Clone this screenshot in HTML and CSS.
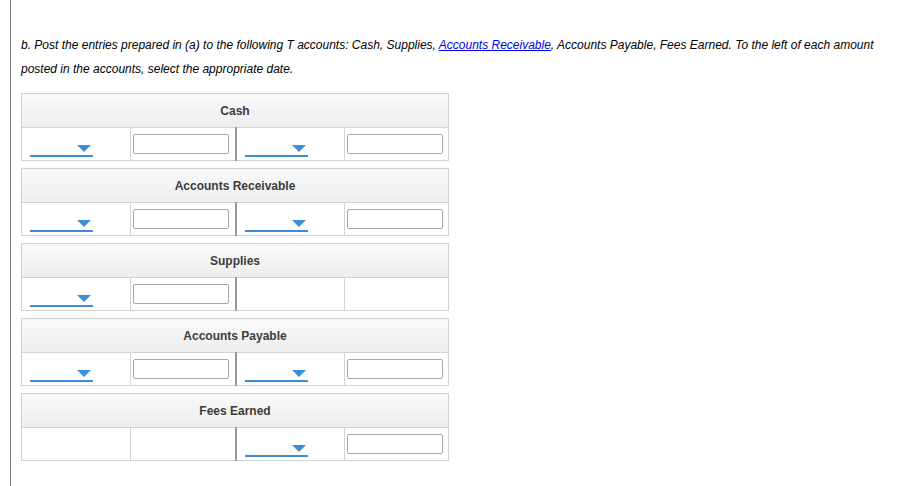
FILE: index.html
```html
<!DOCTYPE html>
<html lang="en">
<head>
  <meta charset="UTF-8">
  <title>T Accounts</title>
  <link rel="stylesheet" href="styles.css">
</head>
<body>
<div class="question">
  <p class="prompt">b. Post the entries prepared in (a) to the following T accounts: Cash, Supplies, <a href="#">Accounts Receivable</a>, Accounts Payable, Fees Earned. To the left of each amount posted in the accounts, select the appropriate date.</p>

  <table class="t-account">
    <colgroup><col class="w1"><col class="w2"><col class="w3"><col class="w4"></colgroup>
    <tr><th colspan="4">Cash</th></tr>
    <tr>
      <td class="c1"><span class="dropdown"><svg width="14" height="7"><polygon points="0,0 14,0 7,7" fill="#3d8ed6"/></svg></span></td>
      <td class="c2"><input type="text"></td>
      <td class="c3"><span class="dropdown"><svg width="14" height="7"><polygon points="0,0 14,0 7,7" fill="#3d8ed6"/></svg></span></td>
      <td class="c4"><input type="text"></td>
    </tr>
  </table>

  <table class="t-account">
    <colgroup><col class="w1"><col class="w2"><col class="w3"><col class="w4"></colgroup>
    <tr><th colspan="4">Accounts Receivable</th></tr>
    <tr>
      <td class="c1"><span class="dropdown"><svg width="14" height="7"><polygon points="0,0 14,0 7,7" fill="#3d8ed6"/></svg></span></td>
      <td class="c2"><input type="text"></td>
      <td class="c3"><span class="dropdown"><svg width="14" height="7"><polygon points="0,0 14,0 7,7" fill="#3d8ed6"/></svg></span></td>
      <td class="c4"><input type="text"></td>
    </tr>
  </table>

  <table class="t-account">
    <colgroup><col class="w1"><col class="w2"><col class="w3"><col class="w4"></colgroup>
    <tr><th colspan="4">Supplies</th></tr>
    <tr>
      <td class="c1"><span class="dropdown"><svg width="14" height="7"><polygon points="0,0 14,0 7,7" fill="#3d8ed6"/></svg></span></td>
      <td class="c2"><input type="text"></td>
      <td class="c3"></td>
      <td class="c4"></td>
    </tr>
  </table>

  <table class="t-account">
    <colgroup><col class="w1"><col class="w2"><col class="w3"><col class="w4"></colgroup>
    <tr><th colspan="4">Accounts Payable</th></tr>
    <tr>
      <td class="c1"><span class="dropdown"><svg width="14" height="7"><polygon points="0,0 14,0 7,7" fill="#3d8ed6"/></svg></span></td>
      <td class="c2"><input type="text"></td>
      <td class="c3"><span class="dropdown"><svg width="14" height="7"><polygon points="0,0 14,0 7,7" fill="#3d8ed6"/></svg></span></td>
      <td class="c4"><input type="text"></td>
    </tr>
  </table>

  <table class="t-account">
    <colgroup><col class="w1"><col class="w2"><col class="w3"><col class="w4"></colgroup>
    <tr><th colspan="4">Fees Earned</th></tr>
    <tr>
      <td class="c1"></td>
      <td class="c2"></td>
      <td class="c3"><span class="dropdown"><svg width="14" height="7"><polygon points="0,0 14,0 7,7" fill="#3d8ed6"/></svg></span></td>
      <td class="c4"><input type="text"></td>
    </tr>
  </table>
</div>
</body>
</html>
```

FILE: styles.css
```css
body {
  font-family: "Liberation Sans", Arial, sans-serif;
  margin: 0;
  padding: 0;
  background-color: white;
}

.question {
  margin-left: 10px;
  border-left: 1px solid #808080;
  padding: 33px 0 0 10px;
  height: 453px;
}

.prompt {
  margin: 0 0 12px 0;
  width: 868px;
  font-size: 12px;
  font-style: italic;
  line-height: 24px;
  color: #000;
}

.prompt a {
  color: #0000ee;
}

.t-account {
  border-collapse: collapse;
  width: 427px;
  margin-bottom: 7px;
  table-layout: fixed;
}

.w1 { width: 109px; }
.w2 { width: 105px; }
.w3 { width: 109px; }
.w4 { width: 104px; }

.t-account th {
  height: 33px;
  padding: 0;
  border: 1px solid #d3d3d3;
  background: linear-gradient(#fafafa, #ededed);
  font-size: 12px;
  font-weight: bold;
  color: #3c3c3c;
  text-align: center;
}

.t-account td {
  height: 32px;
  padding: 0;
  border: 1px solid #d3d3d3;
  vertical-align: middle;
}

.c1 { padding-left: 8px !important; }
.c3 { border-left: 2px solid #999 !important; padding-left: 8px !important; }

.dropdown {
  display: flex;
  justify-content: flex-end;
  align-items: flex-end;
  width: 63px;
  height: 22px;
  margin-top: 3px;
  border-bottom: 2px solid #3d8ed6;
  box-sizing: border-box;
}

.dropdown svg {
  margin: 0 2px 3px 0;
}

input[type="text"] {
  display: block;
  width: 96px;
  height: 20px;
  margin-left: 2px;
  border: 1px solid #a8a8a8;
  border-radius: 2px;
  box-sizing: border-box;
  padding: 0 3px;
}
```
